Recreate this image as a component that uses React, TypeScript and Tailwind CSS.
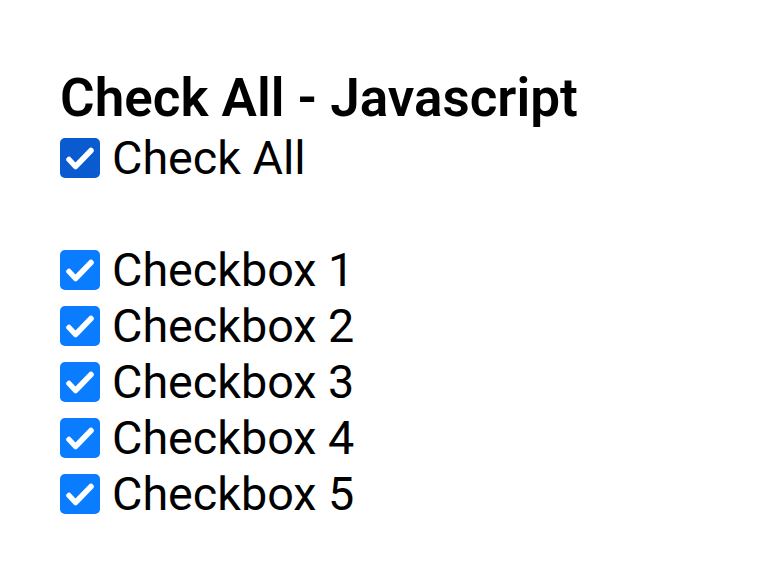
import React from "react";

const Box = ({ dark = false }: { dark?: boolean }) => (
  <span
    className={`inline-flex h-[40px] w-[40px] shrink-0 items-center justify-center rounded-[5px] ${
      dark ? "bg-[#0a5bd0]" : "bg-[#0a7cff]"
    }`}
  >
    <svg viewBox="0 0 40 40" className="h-[40px] w-[40px]">
      <path
        d="M9 21.5 L15.5 28.5 L31 12.5"
        fill="none"
        stroke="white"
        strokeWidth="5.5"
        strokeLinecap="round"
        strokeLinejoin="round"
      />
    </svg>
  </span>
);

const Row = ({ label, dark }: { label: string; dark?: boolean }) => (
  <label className="flex h-[56px] items-center gap-[12px]">
    <Box dark={dark} />
    <span>{label}</span>
  </label>
);

export default function App() {
  return (
    <div
      className="min-h-[576px] w-full bg-white pl-[60px] pt-[66px] text-[46.7px] leading-[56px] text-black"
      style={{ fontFamily: "Roboto, sans-serif" }}
    >
      <h3 className="text-[53px] font-semibold leading-[64px]">Check All - Javascript</h3>
      <Row label="Check All" dark />
      <div className="h-[56px]" />
      {[1, 2, 3, 4, 5].map((n) => (
        <Row key={n} label={`Checkbox ${n}`} />
      ))}
    </div>
  );
}
